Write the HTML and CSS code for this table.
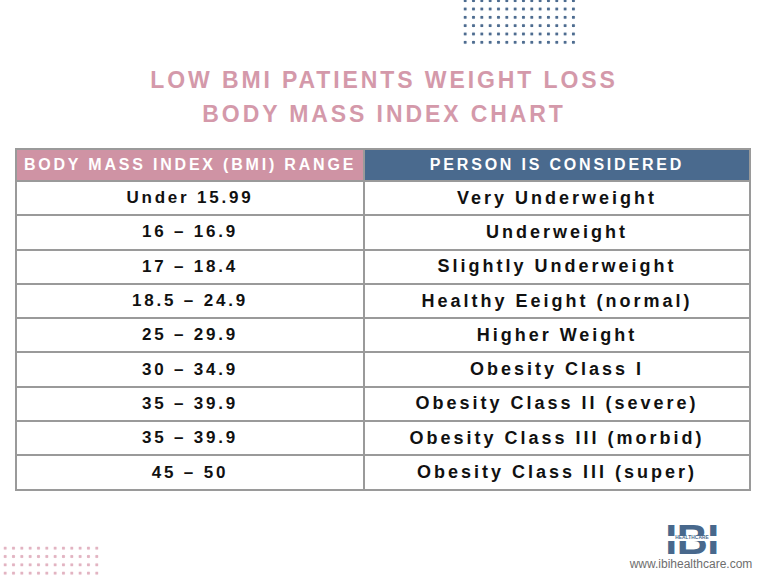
FILE: index.html
```html
<!DOCTYPE html>
<html lang="en">
<head>
<meta charset="utf-8">
<title>Low BMI Patients Weight Loss - Body Mass Index Chart</title>
<link rel="stylesheet" href="styles.css">
</head>
<body>
<div class="page">
  <div class="dots dots-top" aria-hidden="true"></div>
  <div class="dots dots-bottom" aria-hidden="true"></div>

  <h1 class="title">LOW BMI PATIENTS WEIGHT LOSS<br>BODY MASS INDEX CHART</h1>

  <div class="chart">
    <div class="cell head head-range">BODY MASS INDEX (BMI) RANGE</div>
    <div class="cell head head-status">PERSON IS CONSIDERED</div>

    <div class="cell range">Under 15.99</div>
    <div class="cell status">Very Underweight</div>

    <div class="cell range">16 – 16.9</div>
    <div class="cell status">Underweight</div>

    <div class="cell range">17 – 18.4</div>
    <div class="cell status">Slightly Underweight</div>

    <div class="cell range">18.5 – 24.9</div>
    <div class="cell status">Healthy Eeight (normal)</div>

    <div class="cell range">25 – 29.9</div>
    <div class="cell status">Higher Weight</div>

    <div class="cell range">30 – 34.9</div>
    <div class="cell status">Obesity Class I</div>

    <div class="cell range">35 – 39.9</div>
    <div class="cell status">Obesity Class II (severe)</div>

    <div class="cell range">35 – 39.9</div>
    <div class="cell status">Obesity Class III (morbid)</div>

    <div class="cell range">45 – 50</div>
    <div class="cell status">Obesity Class III (super)</div>
  </div>

  <div class="footer">
    <div class="brand">
      <div class="logo">IBI<span class="logo-band">HEALTHCARE</span></div>
      <div class="url">www.ibihealthcare.com</div>
    </div>
  </div>
</div>
</body>
</html>
```

FILE: styles.css
```css
* {
  box-sizing: border-box;
}

html, body {
  margin: 0;
  padding: 0;
  background: #ffffff;
}

body {
  font-family: "Liberation Sans", Arial, sans-serif;
  color: #111111;
}

.page {
  position: relative;
  width: 768px;
  height: 576px;
  overflow: hidden;
  display: flex;
  flex-direction: column;
}

/* decorative dot grids */
.dots {
  position: absolute;
  background-size: 8.33px 8.33px;
}

.dots-top {
  left: 461px;
  top: 0;
  width: 117px;
  height: 47px;
  background-image: radial-gradient(circle, #4c6b8f 1.3px, rgba(76, 107, 143, 0) 1.9px);
  background-position: 0 -3.5px;
}

.dots-bottom {
  left: 1px;
  top: 543.5px;
  width: 100px;
  height: 33px;
  background-image: radial-gradient(circle, #e2b3c1 1.3px, rgba(226, 179, 193, 0) 1.9px);
  background-position: 0 0;
}

.title {
  margin: 63px 0 0 0;
  text-align: center;
  font-size: 23px;
  line-height: 34px;
  font-weight: bold;
  letter-spacing: 2.9px;
  color: #d499aa;
}

.chart {
  margin: 17px 0 0 15px;
  width: 736px;
  display: grid;
  grid-template-columns: 348px 1fr;
  grid-template-rows: 32px;
  grid-auto-rows: 34.3px;
  border-top: 2px solid #9a9a9a;
  border-left: 2px solid #9a9a9a;
}

.cell {
  display: flex;
  align-items: center;
  justify-content: center;
  border-right: 2px solid #9a9a9a;
  border-bottom: 2px solid #9a9a9a;
  font-weight: bold;
  white-space: nowrap;
}

.head {
  color: #ffffff;
  font-size: 16px;
  letter-spacing: 2.8px;
}

.head-range {
  background: #cf93a4;
}

.head-status {
  background: #4a6a8e;
}

.range {
  font-size: 17px;
  letter-spacing: 2.8px;
}

.status {
  font-size: 18px;
  letter-spacing: 3px;
}

.footer {
  display: flex;
  justify-content: flex-end;
  padding: 0 16px 0 0;
  margin-top: 33px;
}

.brand {
  display: flex;
  flex-direction: column;
  align-items: center;
  width: 122px;
  gap: 2px;
}

.logo {
  position: relative;
  font-size: 43px;
  line-height: 31px;
  height: 31px;
  font-weight: bold;
  color: #48688c;
  letter-spacing: -0.5px;
  margin-left: 2px;
}

.logo-band {
  position: absolute;
  left: -1px;
  right: -1px;
  top: 12.5px;
  height: 4.5px;
  background: #ffffff;
  font-size: 4.8px;
  line-height: 4.5px;
  letter-spacing: 0.1px;
  text-align: center;
  color: #48688c;
}

.url {
  font-size: 12px;
  line-height: 14px;
  color: #6e6e6e;
  white-space: nowrap;
}
```
